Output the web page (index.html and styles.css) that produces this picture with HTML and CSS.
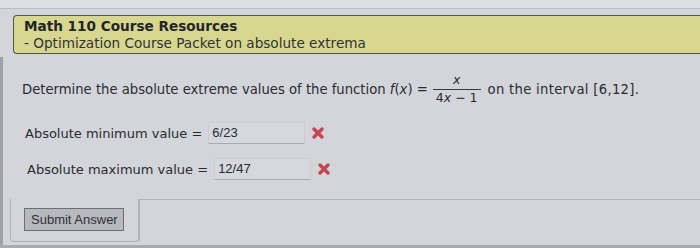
FILE: index.html
```html
<!DOCTYPE html>
<html lang="en">
<head>
    <meta charset="UTF-8">
    <title>Math 110 - Absolute Extrema</title>
    <link rel="stylesheet" href="styles.css">
</head>
<body>

<div class="topbar"></div>

<div class="banner">
    <div class="banner-title">Math 110 Course Resources</div>
    <div class="banner-sub">- Optimization Course Packet on absolute extrema</div>
</div>

<div class="problem">
    <div class="question">
        <span>Determine the absolute extreme values of the function <i>f</i>(<i>x</i>) =</span>
        <span class="frac">
            <span class="num"><i>x</i></span>
            <span class="den">4<i>x</i> &minus; 1</span>
        </span>
        <span class="tail">on the interval [6,12].</span>
    </div>

    <div class="answer-row">
        <span class="label">Absolute minimum value =</span>
        <span class="answer">6/23</span>
        <svg class="wrong" width="14" height="14" viewBox="0 0 14 14"><path d="M3 3 L11 11 M11 3 L3 11" stroke="#c9434f" stroke-width="3.4" stroke-linecap="round"/></svg>
    </div>
    <div class="answer-row">
        <span class="label">Absolute maximum value =</span>
        <span class="answer">12/47</span>
        <svg class="wrong" width="14" height="14" viewBox="0 0 14 14"><path d="M3 3 L11 11 M11 3 L3 11" stroke="#c9434f" stroke-width="3.4" stroke-linecap="round"/></svg>
    </div>

    <div class="submit-bar">
        <div class="submit-tab">
            <button class="submit">Submit Answer</button>
        </div>
        <div class="submit-rest"></div>
    </div>
</div>

<div class="bottom"></div>

</body>
</html>
```

FILE: styles.css
```css
body { margin: 0; background: #d3d5db; font-family: 'DejaVu Sans', Verdana, sans-serif; font-size: 13px; color: #2a2b30; overflow: hidden; height: 248px; }

.topbar { height: 8px; background: #dcdee3; border-bottom: 1px solid #b9bbc1; }

/* Yellow course banner */
.banner { margin: 6px 0 0 13px; height: 35px; padding: 2px 10px 0; background: #d7d78f; border: 1px solid #55574a; border-right: none; border-radius: 4px 0 0 4px; font-size: 13.6px; }
.banner-title { font-weight: bold; line-height: 17px; color: #24252a; }
.banner-sub { line-height: 17px; color: #303136; }

/* Problem area */
.problem { border-left: 3px solid #9fa1a7; margin-top: 3px; padding-top: 16px; height: 172px; }
.question { display: flex; align-items: center; gap: 5px; padding-left: 19px; font-size: 13.2px; }
.question .tail { margin-left: 2px; letter-spacing: 0.3px; }
.frac { display: inline-flex; flex-direction: column; align-items: center; font-size: 12.5px; }
.frac .num { padding: 0 4px 2px; line-height: 14px; }
.frac .den { border-top: 1px solid #3a3b40; padding: 1px 3px 0; min-width: 40px; text-align: center; line-height: 14px; }

.answer-row { display: flex; align-items: center; padding-left: 22px; margin-top: 16px; height: 24px; }
.answer-row + .answer-row { margin-top: 12px; padding-left: 24px; }
.label { margin-right: 6px; }
.answer { width: 92px; height: 20px; padding-left: 3px; line-height: 20px; font-family: 'Liberation Sans', Arial, sans-serif; font-size: 13px; border: 1px solid #cbcdd3; border-bottom-color: #a8aab0; background: #d6d8de; }
.wrong { margin-left: 6px; }

/* Submit button tab */
.submit-bar { display: flex; margin-top: 18px; }
.submit-tab { width: 129px; height: 43px; margin-left: 7px; border: 1px solid #b0b2b8; border-top: none; border-radius: 0 0 4px 4px; padding: 9px 0 0 13px; box-sizing: border-box; }
.submit-rest { flex: 1; border-top: 1px solid #b0b2b8; border-left: 1px solid #b0b2b8; margin-top: 0; }
.submit { font-family: 'Liberation Sans', Arial, sans-serif; font-size: 13px; color: #303136; background: #b8b9be; border: 1px solid #6d6e74; padding: 0 6px; height: 23px; width: 100px; white-space: nowrap; }

.bottom { height: 8px; background: #a9abb1; }
```
